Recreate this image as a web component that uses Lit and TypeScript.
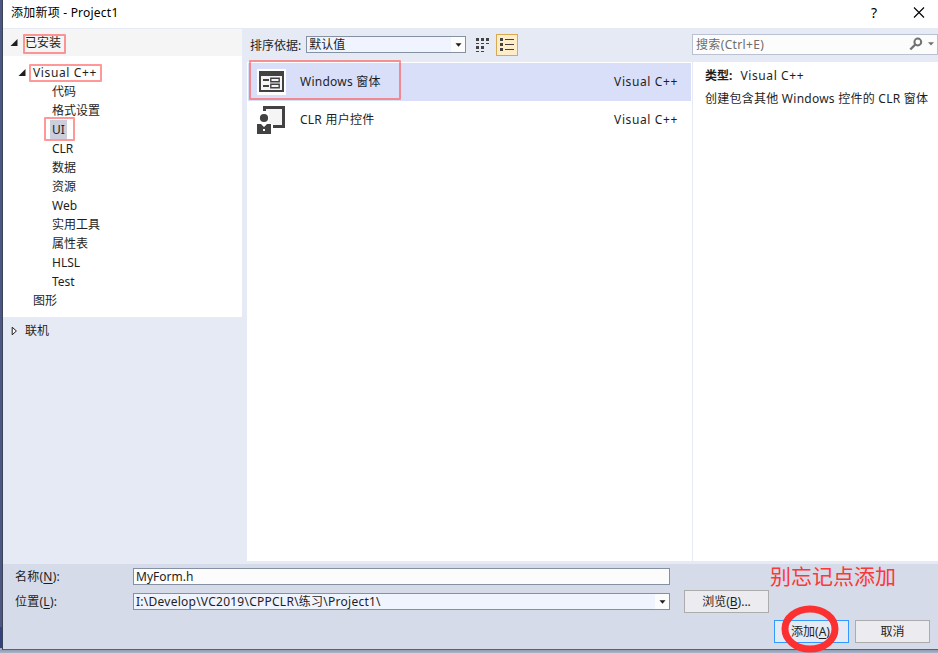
import { LitElement, html, css } from "lit";
import { customElement } from "lit/decorators.js";

const treeItems = ["代码", "格式设置", "UI", "CLR", "数据", "资源", "Web", "实用工具", "属性表", "HLSL", "Test"];

@customElement("app-root")
export class AppRoot extends LitElement {
  static styles = css`
    :host {
      display: block;
      position: relative;
      width: 938px;
      height: 653px;
      overflow: hidden;
      box-sizing: border-box;
      padding-left: 2px;
      background: linear-gradient(#4c5782 0 627px, #31447d 627px 648px, #a4aec4 648px);
      font: 12px/19px "Noto Sans", "Noto Sans CJK SC", sans-serif;
      color: #1e1e1e;
      white-space: nowrap;
    }
    * { box-sizing: border-box; }
    svg { display: block; flex: none; }
    .dialog {
      display: flex;
      flex-direction: column;
      height: 650px;
      border-left: 1px solid #3c4258;
      border-bottom: 1px solid #5c6170;
      background: #e6eaf5;
    }
    .below { height: 3px; margin-left: -2px; background: linear-gradient(#929cb1, #abb5c9); }
    .title {
      display: flex;
      align-items: center;
      height: 28px;
      padding: 0 13px 3px 8px;
      background: #fff;
      color: #000;
    }
    .title .name { flex: 1; letter-spacing: 0.22px; }
    .help { width: 12px; margin-right: 33px; font-size: 14px; text-align: center; }
    .body { display: flex; height: 536px; }
    .side { width: 239px; margin-right: 5px; padding-top: 1px; }
    .head {
      display: flex;
      align-items: center;
      height: 27px;
      padding-left: 7px;
      background: #f5f5f5;
    }
    .head svg { margin-right: 7px; }
    .tree { height: 261px; background: #fff; padding-top: 7px; }
    .node { display: flex; align-items: center; height: 19px; padding-left: 15px; }
    .node svg { margin-right: 7px; }
    .leaf { height: 19px; padding-left: 47px; }
    .leaf span { display: inline-block; height: 19px; padding: 0 2px; }
    .leaf .on { background: #cccedb; }
    .root { padding-left: 30px; }
    .wide { letter-spacing: 0.62px; }
    .soft { letter-spacing: 0.25px; }
    .online { display: flex; align-items: center; height: 27px; padding-left: 8px; }
    .online svg { margin-right: 7px; }
    .main { flex: 1; display: flex; flex-direction: column; }
    .tools { display: flex; align-items: center; height: 34px; padding-left: 3px; }
    .combo {
      display: flex;
      align-items: center;
      justify-content: space-between;
      height: 17px;
      border: 1px solid #8591a2;
      background: linear-gradient(90deg, #f0f4fe calc(100% - 14px), #fcfcfc 0);
      padding: 0 3px 0 2px;
    }
    .sort { width: 160px; margin: 0 9px 1px 5px; }
    .view { width: 22px; height: 22px; border: 1px solid #d9a84f; background: #ffecc8; margin-left: 6px; }
    .search {
      display: flex;
      align-items: center;
      width: 246px;
      height: 21px;
      margin: 0 0 1px auto;
      padding: 0 2px 1px 3px;
      border: 1px solid #b9c1d3;
      background: #fcfcfc;
      color: #6d6d6d;
    }
    .search span { flex: 1; letter-spacing: 0.35px; }
    .content { display: flex; height: 499px; background: #fff; }
    .list { width: 446px; border-right: 1px solid #e6eaf5; padding: 1px 1px 0 1px; }
    .row { display: flex; align-items: center; height: 38px; padding: 0 13px 0 8px; }
    .row.on { background: #dadff9; }
    .row span { padding-bottom: 2px; }
    .row .label { flex: 1; margin-left: 14px; }
    .info { padding: 4px 0 0 12px; }
    .info p { margin: 0 0 4px; }
    .info b { margin-right: 8px; }
    .foot { height: 85px; background: #d5dbe9; padding: 4px 8px 0 12px; }
    .field { display: flex; align-items: center; height: 17px; margin-top: 0; }
    .field label { width: 118px; letter-spacing: 0.25px; }
    .file { height: 17px; width: 537px; border: 1px solid #8591a2; background: #fcfcfc; padding-left: 2px; line-height: 15px; }
    .place { margin-top: 5px; height: 23px; }
    .place .combo { width: 537px; margin-right: 14px; }
    .button {
      display: flex;
      align-items: center;
      justify-content: center;
      height: 23px;
      border: 1px solid #acacac;
      background: #ecebf0;
      width: 75px;
    }
    .browse { width: 85px; }
    .primary { border-color: #3399ff; background: #e5eaf5; padding-right: 2px; }
    .actions { display: flex; justify-content: flex-end; gap: 6px; margin-top: 7px; }
    u { text-underline-offset: 2px; }
    .mark { position: absolute; border: 2px solid rgba(255, 72, 72, 0.56); border-radius: 1px; }
    .m1 { left: 23px; top: 34px; width: 43px; height: 20px; }
    .m2 { left: 29px; top: 64px; width: 73px; height: 18px; }
    .m3 { left: 44px; top: 117px; width: 31px; height: 24px; }
    .m4 { left: 249px; top: 60px; width: 152px; height: 40px; }
    .ring { position: absolute; left: 781px; top: 605px; }
    .note { position: absolute; left: 770px; top: 562px; font: 21px/26px "Noto Sans CJK SC", sans-serif; color: #fc3737; }
  `;

  private arrow = (color = "#1e1e1e") => html`<svg width="7" height="4" viewBox="0 0 7 4"><path d="M.5.3h6L3.5 3.7z" fill=${color} /></svg>`;
  private open = () => html`<svg width="8" height="8" viewBox="0 0 8 8"><path d="M7.5 0V7H.5z" fill="#1e1e1e" /></svg>`;

  render() {
    return html`
      <div class="dialog">
        <div class="title">
          <span class="name">添加新项 - Project1</span>
          <span class="help">?</span>
          <svg width="12" height="12" viewBox="0 0 12 12"><path d="M1 .5l10 10M11 .5L1 10.5" stroke="#000" stroke-width="1.1" /></svg>
        </div>
        <div class="body">
          <div class="side">
            <div class="head">${this.open()}<span>已安装</span></div>
            <div class="tree">
              <div class="node">${this.open()}<span class="wide">Visual C++</span></div>
              ${treeItems.map((t) => html`<div class="leaf"><span class=${t === "UI" ? "on" : ""}>${t}</span></div>`)}
              <div class="root">图形</div>
            </div>
            <div class="online">
              <svg width="7" height="10" viewBox="0 0 7 10"><path d="M1.2 1.2v7.6L5.4 5z" fill="#fff" stroke="#1e1e1e" /></svg>
              <span>联机</span>
            </div>
          </div>
          <div class="main">
            <div class="tools">
              <span>排序依据:</span>
              <div class="combo sort"><span>默认值</span>${this.arrow()}</div>
              <svg width="15" height="15" viewBox="0 0 15 15" fill="#424242">
                <path d="M1 0h3v3H1zM6 0h3v3H6zM11 0h3v3h-3zM1 5h3v1H1zM6 5h3v1H6zM11 5h3v1h-3zM1 8h3v3H1zM6 8h3v3H6zM1 13h3v1H1zM6 13h3v1H6z" />
              </svg>
              <div class="view">
                <svg width="20" height="20" viewBox="0 0 20 20" fill="#424242">
                  <path d="M3 3h3v3H3zM3 8h3v3H3zM3 13h3v3H3zM8 4h9v1H8zM8 9h9v1H8zM8 14h9v1H8z" />
                </svg>
              </div>
              <div class="search">
                <span>搜索(Ctrl+E)</span>
                <svg width="14" height="14" viewBox="0 0 14 14" fill="none" stroke="#717171">
                  <circle cx="8.8" cy="5" r="3.4" stroke-width="2" />
                  <path d="M6.3 7.5L1.3 12.5" stroke-width="2.4" />
                </svg>
                <svg width="12" height="4" viewBox="-5 0 12 4"><path d="M0 .3h6L3 3.5z" fill="#717171" /></svg>
              </div>
            </div>
            <div class="content">
              <div class="list">
                <div class="row on">
                  <svg width="30" height="26" viewBox="0 0 30 26">
                    <path d="M1 0h29v26H1z" fill="#fff" />
                    <path d="M3 2h25v21H3z" fill="#424242" />
                    <path d="M5 7h21v14H5z" fill="#f5f5f5" />
                    <path d="M7 10h6v2H7zM7 16h6v2H7z" fill="#424242" />
                    <path d="M14.8 9.3h8.4v3.4h-8.4zM14.8 15.3h8.4v3.4h-8.4z" fill="#f5f5f5" stroke="#424242" stroke-width="1.4" />
                  </svg>
                  <span class="label soft">Windows 窗体</span><span class="wide">Visual C++</span>
                </div>
                <div class="row">
                  <svg width="30" height="28" viewBox="0 0 30 28">
                    <path d="M7 0h22v22H7z" fill="#424242" />
                    <path d="M10 3h16v16H10z" fill="#f5f5f5" />
                    <path d="M0 5h13v13h4v10H0z" fill="#fff" />
                    <circle cx="8" cy="12" r="5.4" fill="#fff" />
                    <circle cx="8" cy="12" r="4.1" fill="#424242" />
                    <path d="M1 18h4l3 3 3-3h4v10H1z" fill="#424242" />
                    <path d="M7 23h2v2H7z" fill="#fff" />
                  </svg>
                  <span class="label soft">CLR 用户控件</span><span class="wide">Visual C++</span>
                </div>
              </div>
              <div class="info">
                <p><b>类型:</b><span class="wide">Visual C++</span></p>
                <p class="soft">创建包含其他 Windows 控件的 CLR 窗体</p>
              </div>
            </div>
          </div>
        </div>
        <div class="foot">
          <div class="field"><label>名称(<u>N</u>):</label><div class="file">MyForm.h</div></div>
          <div class="field place">
            <label>位置(<u>L</u>):</label>
            <div class="combo"><span class="soft">I:\\Develop\\VC2019\\CPPCLR\\练习\\Project1\\</span>${this.arrow()}</div>
            <div class="button browse"><span>浏览(<u>B</u>)...</span></div>
          </div>
          <div class="actions">
            <div class="button primary"><span>添加(<u>A</u>)</span></div>
            <div class="button"><span>取消</span></div>
          </div>
        </div>
      </div>
      <div class="below"></div>
      <div class="mark m1"></div>
      <div class="mark m2"></div>
      <div class="mark m3"></div>
      <div class="mark m4"></div>
      <div class="note">别忘记点添加</div>
      <svg class="ring" width="58" height="48" viewBox="0 0 58 48"><ellipse cx="29" cy="24" rx="25" ry="20" fill="none" stroke="#fc3030" stroke-width="7" /></svg>
    `;
  }
}
